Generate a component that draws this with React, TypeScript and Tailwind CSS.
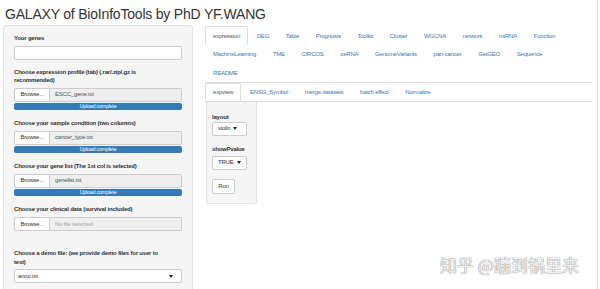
const Label = ({ children }: { children: React.ReactNode }) => (
  <div className="text-[6px] leading-[8.6px] font-bold text-[#333] mb-[3px]">{children}</div>
);

const FileInput = ({ file, done }: { file?: string; done?: boolean }) => (
  <div className={done ? "mb-[9px]" : "mb-[18px]"}>
    <div className="flex h-[14px]">
      <div className="w-[36px] shrink-0 bg-white border border-[#ccc] rounded-l-[2px] flex items-center justify-center text-[6px] text-[#333]">
        Browse...
      </div>
      <div
        className={`flex-1 bg-[#eee] border border-l-0 border-[#ccc] rounded-r-[2px] flex items-center pl-[5px] text-[6px] ${
          file ? "text-[#555]" : "text-[#aaa]"
        }`}
      >
        {file ?? "No file selected"}
      </div>
    </div>
    {done && (
      <div className="mt-[1px] h-[7.5px] rounded-[2px] bg-[#337ab7] flex items-center justify-center text-[5.3px] text-white">
        Upload complete
      </div>
    )}
  </div>
);

const Caret = () => (
  <span className="inline-block w-0 h-0 border-x-[2.5px] border-x-transparent border-t-[3px] border-t-[#222]" />
);

const Tab = ({ label, active }: { label: string; active?: boolean }) => (
  <li
    className={`px-[7px] py-[4.5px] mr-[0.7px] text-[6px] leading-[8.6px] rounded-t-[2px] border border-b-0 ${
      active ? "border-[#ddd] bg-white text-[#555]" : "border-transparent text-[#337ab7]"
    }`}
  >
    {label}
  </li>
);

const mainTabs = [
  "expression", "DEG", "Table", "Prognosis", "Toolkit", "Cluster", "WGCNA", "network", "miRNA", "Function",
  "MachineLearning", "TME", "CIRCOS", "ceRNA", "GenomeVariants", "pan-cancer", "GetGEO", "Sequence",
];

const subTabs = ["expview", "ENSG_Symbol", "merge datasets", "batch effect", "Normalize"];

export default function App() {
  return (
    <div className="relative w-[600px] h-[289px] overflow-hidden bg-white text-[#333] tracking-[-0.2px] font-['Liberation_Sans',Arial,sans-serif]">
      <h2 className="pl-[5px] pt-[6px] mb-[1px] h-[24px] text-[14px] leading-[17px] tracking-[-0.2px] font-medium text-[#333]">
        GALAXY of BioInfoTools by PhD YF.WANG
      </h2>

      <div className="flex items-start">
        <aside className="ml-[3px] w-[190px] shrink-0 h-[300px] bg-[#f5f5f5] border border-[#e3e3e3] rounded-[3px] px-[10px] pt-[8px]">
          <Label>Your genes</Label>
          <div className="h-[14px] bg-white border border-[#ccc] rounded-[2px] mb-[8px]" />

          <Label>
            Choose expression profile (tab) (.rar/.zip/.gz is
            <br />
            recommended)
          </Label>
          <FileInput file="ESCC_gene.txt" done />

          <Label>Choose your sample condition (two columns)</Label>
          <FileInput file="cancer_type.txt" done />

          <Label>Choose your gene list (The 1st col is selected)</Label>
          <FileInput file="genelist.txt" done />

          <Label>Choose your clinical data (survival included)</Label>
          <FileInput />

          <Label>
            Choose a demo file: (we provide demo files for user to
            <br />
            test)
          </Label>
          <div className="h-[14px] bg-white border border-[#ccc] rounded-[2px] flex items-center justify-between pl-[3px] pr-[8px] text-[6px] text-[#333]">
            <span>anno.txt</span>
            <Caret />
          </div>
        </aside>

        <main className="ml-[12px] w-[387px] pt-[1px]">
          <ul className="flex flex-wrap border-b border-[#ddd]">
            {mainTabs.map((t) => (
              <Tab key={t} label={t} active={t === "expression"} />
            ))}
            <li className="basis-full h-0" />
            <Tab label="README" />
          </ul>
          <ul className="flex flex-wrap border-b border-[#ddd]">
            {subTabs.map((t) => (
              <Tab key={t} label={t} active={t === "expview"} />
            ))}
          </ul>

          <div className="ml-[1px] w-[51px] bg-[#f5f5f5] border border-t-0 border-[#e3e3e3] rounded-b-[3px] pl-[5px] pt-[11px] pb-[9px]">
            <div className="text-[6px] leading-[8.6px] font-bold text-[#333]">layout</div>
            <div className="w-[35px] h-[14px] bg-white border border-[#ccc] rounded-[2px] flex items-center gap-[3px] pl-[5px] text-[6px] text-[#333]">
              <span>violin</span>
              <Caret />
            </div>
            <div className="mt-[9px] text-[6px] leading-[8.6px] font-bold text-[#333]">showPvalue</div>
            <div className="mt-[2px] w-[35px] h-[14px] bg-white border border-[#ccc] rounded-[2px] flex items-center gap-[3px] pl-[5px] text-[6px] text-[#333]">
              <span>TRUE</span>
              <Caret />
            </div>
            <div className="mt-[9px] w-[23px] h-[15px] bg-white border border-[#ccc] rounded-[2px] flex items-center justify-center text-[6px] text-[#333]">
              Run
            </div>
          </div>
        </main>
      </div>

      <div className="absolute left-[440px] top-[255px] text-[17px] leading-[20px] tracking-normal text-[#f2f2f2] [text-shadow:0_0_1px_#8a8a8a,0_0_1px_#8a8a8a] font-['Noto_Sans_CJK_SC',sans-serif]">
        知乎 @蹦到锅里来
      </div>
      <div className="absolute left-[597px] top-0 h-full w-px bg-[#e3e3e3]" />
    </div>
  );
}
